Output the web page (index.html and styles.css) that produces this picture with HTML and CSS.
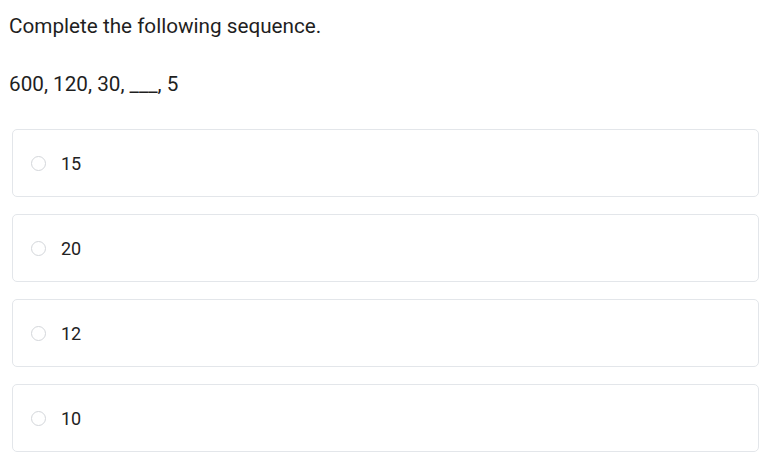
FILE: index.html
```html
<!DOCTYPE html>
<html>
<head>
<meta charset="utf-8">
<link rel="stylesheet" href="styles.css">
</head>
<body>
<div class="question">
  <p class="title">Complete the following sequence.</p>
  <p class="prompt">600, 120, 30, ___, 5</p>
</div>
<div class="options">
  <label class="option"><span class="radio"></span><span class="label">15</span></label>
  <label class="option"><span class="radio"></span><span class="label">20</span></label>
  <label class="option"><span class="radio"></span><span class="label">12</span></label>
  <label class="option"><span class="radio"></span><span class="label">10</span></label>
</div>
</body>
</html>
```
FILE: styles.css
```css
html, body {
  margin: 0;
  padding: 0;
  background: #ffffff;
}
body {
  font-family: Roboto, "Liberation Sans", sans-serif;
  color: #1f1f1f;
}
.question {
  padding: 12px 9px 0 9px;
}
.title {
  margin: 0;
  font-size: 20.7px;
  line-height: 28px;
}
.prompt {
  margin: 30px 0 0 0;
  font-size: 20.7px;
  line-height: 28px;
}
.options {
  display: flex;
  flex-direction: column;
  gap: 17px;
  padding: 31px 9px 0 12px;
}
.option {
  display: flex;
  align-items: center;
  height: 66px;
  border: 1px solid #e3e6ea;
  border-radius: 5px;
  padding-left: 18px;
}
.radio {
  width: 13px;
  height: 13px;
  border: 1px solid #d3d6da;
  border-radius: 50%;
  margin-right: 15px;
}
.label {
  font-size: 18px;
  color: #222;
}
```
